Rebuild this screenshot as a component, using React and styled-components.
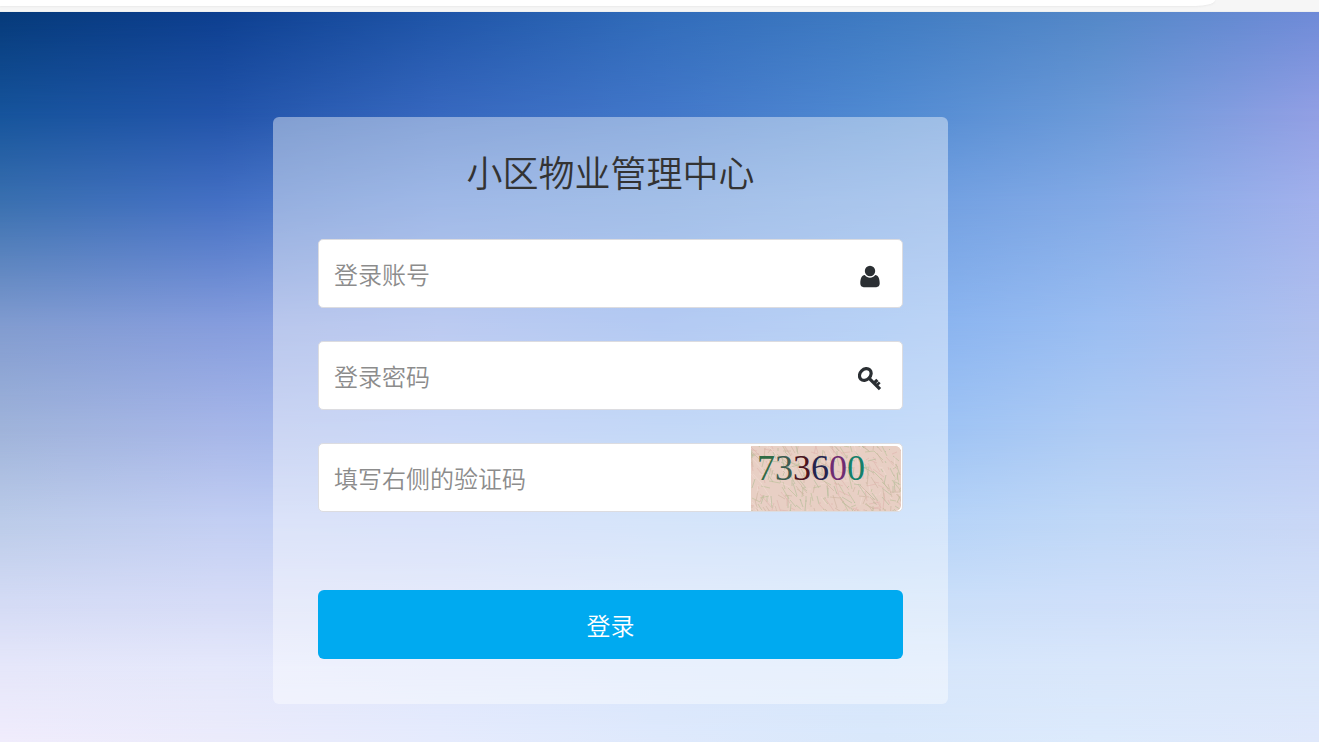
import React, { useState } from "react";
import styled, { createGlobalStyle } from "styled-components";

const GlobalStyle = createGlobalStyle`
    * {
        box-sizing: border-box;
    }
    body {
        margin: 0;
        background: #f6f6f6;
        color: #333;
        font-family: "Noto Sans CJK SC", "Liberation Sans", sans-serif;
    }
    input, button {
        font-family: inherit;
    }
`;

// Sky colours, one row per height (in % of the page), left to right
const SKY = [
    { at: 0, colors: ["#063a7a", "#0d3f90", "#1f55a8", "#316cba", "#3f7bc2", "#5488c8", "#6f8bd8"] },
    { at: 14, colors: ["#16549c", "#2254aa", "#3768bf", "#4277c9", "#508ad2", "#6c9ad9", "#929fe4"] },
    { at: 26, colors: ["#3a70b0", "#4470c4", "#5a86d6", "#6191d7", "#6d9de0", "#83aae6", "#a2b1ec"] },
    { at: 43, colors: ["#829cd0", "#869ddd", "#8ca5e7", "#7ea4ea", "#85b1ef", "#9bbef2", "#b0c0ee"] },
    { at: 57, colors: ["#9fb3da", "#a6b6e8", "#a2baf1", "#99bcf1", "#98c0f4", "#aecbf4", "#bccbf4"] },
    { at: 70, colors: ["#bccce9", "#c3cff3", "#bfcff7", "#b8d2f7", "#b3d2f8", "#c0d8f7", "#c9d7f6"] },
    { at: 81, colors: ["#d4dbf5", "#d6dcf7", "#d3dcf8", "#cfdef9", "#c9dff9", "#cfdffa", "#d3e0f8"] },
    { at: 90, colors: ["#e6e7fa", "#e5e8fb", "#dfe6fc", "#d9e6fc", "#d6e6fb", "#d9e7fb", "#dbe7fa"] },
    { at: 100, colors: ["#f0ecfc", "#ebebfb", "#e5ebfd", "#dee9fc", "#d9e8fb", "#dceafc", "#dfe8fb"] },
];

const Page = styled.div`
    display: flex;
    flex-direction: column;
    min-height: 100vh;
`;

const TopBar = styled.header`
    height: 12px;
    padding-right: 104px;
    background: #f6f6f6;
    border-bottom: 1px solid #eef0f0;
`;

const AddressBar = styled.div`
    height: 6px;
    background: #fff;
    border-radius: 0 0 20px 0 / 0 0 6px 0;
    box-shadow: 0 1px 2px #eaeaea;
`;

const Scene = styled.main`
    display: grid;
    flex: 1;
`;

const SkyRow = styled.div`
    grid-area: 1 / 1;
    background: linear-gradient(to right, ${(p) => p.$colors.join(", ")});
    mask-image: ${(p) => (p.$to > 0 ? `linear-gradient(transparent ${p.$from}%, #000 ${p.$to}%)` : "none")};
`;

const Center = styled.div`
    grid-area: 1 / 1;
    z-index: 1;
    display: flex;
    justify-content: center;
    align-items: flex-start;
    padding: 105px 98px 38px 0;
`;

const LoginForm = styled.form`
    display: flex;
    flex-direction: column;
    width: 100%;
    max-width: 675px;
    padding: 27px 45px 45px;
    border-radius: 6px;
    background: rgba(255, 255, 255, 0.42);
`;

const Title = styled.h1`
    margin: 0 0 41px;
    font-size: 36px;
    font-weight: 350;
    line-height: 54px;
    text-align: center;
`;

const Fields = styled.div`
    display: flex;
    flex-direction: column;
    gap: 33px;
    margin-bottom: 78px;
`;

const Field = styled.div`
    display: flex;
    align-items: center;
    height: 69px;
    border: 1px solid #dcdce0;
    border-radius: 5px;
    background: #fff;
`;

const Input = styled.input`
    flex: 1;
    min-width: 0;
    height: 100%;
    padding: 0 15px;
    border: 0;
    outline: 0;
    background: transparent;
    color: #333;
    font-size: 24px;
    font-weight: 350;

    &::placeholder {
        color: #8c8c8c;
        opacity: 1;
    }
`;

const Icon = styled.svg`
    width: 24px;
    height: 24px;
    margin: 6px 20px 0 0;
    color: #2b2f33;
`;

const CaptchaButton = styled.button`
    align-self: flex-end;
    width: 150px;
    height: 65px;
    margin-right: 1px;
    padding: 0;
    border: 0;
    border-radius: 0 6px 6px 0;
    background: #ebd0c8;
    overflow: hidden;
    cursor: pointer;

    svg {
        display: block;
    }
`;

const CaptchaDigit = styled.text`
    font-family: "Liberation Serif", serif;
    font-size: 36px;
`;

const Submit = styled.button`
    height: 69px;
    border: 0;
    border-radius: 6px;
    background: #00aaf0;
    color: #fff;
    font-size: 24px;
    font-weight: 350;
    cursor: pointer;
`;

const UserIcon = () => (
    <Icon viewBox="0 0 24 24" fill="currentColor" aria-hidden="true">
        <circle cx="12" cy="6" r="5.2" />
        <path d="M6.800 10C3.600 10.400 2.300 13.500 2.300 18.600 2.300 20.800 3.700 22.200 5.700 22.200H18.300C20.300 22.200 21.700 20.800 21.700 18.600 21.700 13.500 20.400 10.400 17.200 10 15.800 11.700 14 12.700 12 12.700S8.200 11.700 6.800 10Z" />
    </Icon>
);

const KeyIcon = () => (
    <Icon viewBox="0 0 24 24" fill="none" stroke="currentColor" strokeWidth="3.200" aria-hidden="true">
        <ellipse cx="7.300" cy="7.500" rx="6.400" ry="5.200" transform="rotate(-45 7.300 7.500)" />
        <path d="M11.200 11.400 22 22.200M16 16.200 19.400 12.800" />
        <path d="M18.700 18.400 21.700 15.400" strokeWidth="2.600" />
    </Icon>
);

const DIGITS = [
    { value: "7", color: "#2f6b45" },
    { value: "3", color: "#3c5c50" },
    { value: "3", color: "#4a1420" },
    { value: "6", color: "#24244e" },
    { value: "0", color: "#6e2c72" },
    { value: "0", color: "#14806a" },
];

const NOISE_COLORS = ["#b0bc98", "#e0b4ae", "#b9bf98", "#f2dcd4", "#cdb4a0"];

// Seeded generator, so the scratches are the same on every render
const makeNoise = (count) => {
    let seed = 17;
    const next = (max) => {
        seed = (seed * 16807) % 2147483647;
        return seed % max;
    };
    return Array.from({ length: count }, () => ({
        d: `M${next(156) - 4} ${next(74) - 6}l${next(15) - 3} ${next(16) - 2}`,
        color: NOISE_COLORS[next(NOISE_COLORS.length)],
    }));
};

const NOISE = makeNoise(420);

const Captcha = () => (
    <svg width="150" height="65" viewBox="0 0 150 65" role="img" aria-label="验证码">
        <rect width="150" height="65" fill="#e8cfc4" />
        {NOISE.map((line, i) => (
            <path key={i} d={line.d} stroke={line.color} strokeOpacity="0.6" fill="none" />
        ))}
        {DIGITS.map((digit, i) => (
            <CaptchaDigit key={i} x={6 + i * 18} y="34" fill={digit.color}>
                {digit.value}
            </CaptchaDigit>
        ))}
    </svg>
);

const App = () => {
    const [username, setUsername] = useState("");
    const [password, setPassword] = useState("");
    const [code, setCode] = useState("");

    const handleSubmit = (e) => {
        e.preventDefault();
    };

    return (
        <Page>
            <GlobalStyle />
            <TopBar>
                <AddressBar />
            </TopBar>
            <Scene>
                {SKY.map((row, i) => (
                    <SkyRow key={row.at} $colors={row.colors} $from={i ? SKY[i - 1].at : 0} $to={row.at} />
                ))}
                <Center>
                    <LoginForm onSubmit={handleSubmit}>
                        <Title>小区物业管理中心</Title>
                        <Fields>
                            <Field>
                                <Input
                                    type="text"
                                    name="username"
                                    aria-label="登录账号"
                                    placeholder="登录账号"
                                    value={username}
                                    onChange={(e) => setUsername(e.target.value)}
                                />
                                <UserIcon />
                            </Field>
                            <Field>
                                <Input
                                    type="password"
                                    name="password"
                                    aria-label="登录密码"
                                    placeholder="登录密码"
                                    value={password}
                                    onChange={(e) => setPassword(e.target.value)}
                                />
                                <KeyIcon />
                            </Field>
                            <Field>
                                <Input
                                    type="text"
                                    name="code"
                                    aria-label="填写右侧的验证码"
                                    placeholder="填写右侧的验证码"
                                    value={code}
                                    onChange={(e) => setCode(e.target.value)}
                                />
                                <CaptchaButton type="button">
                                    <Captcha />
                                </CaptchaButton>
                            </Field>
                        </Fields>
                        <Submit type="submit">登录</Submit>
                    </LoginForm>
                </Center>
            </Scene>
        </Page>
    );
};

export default App;
